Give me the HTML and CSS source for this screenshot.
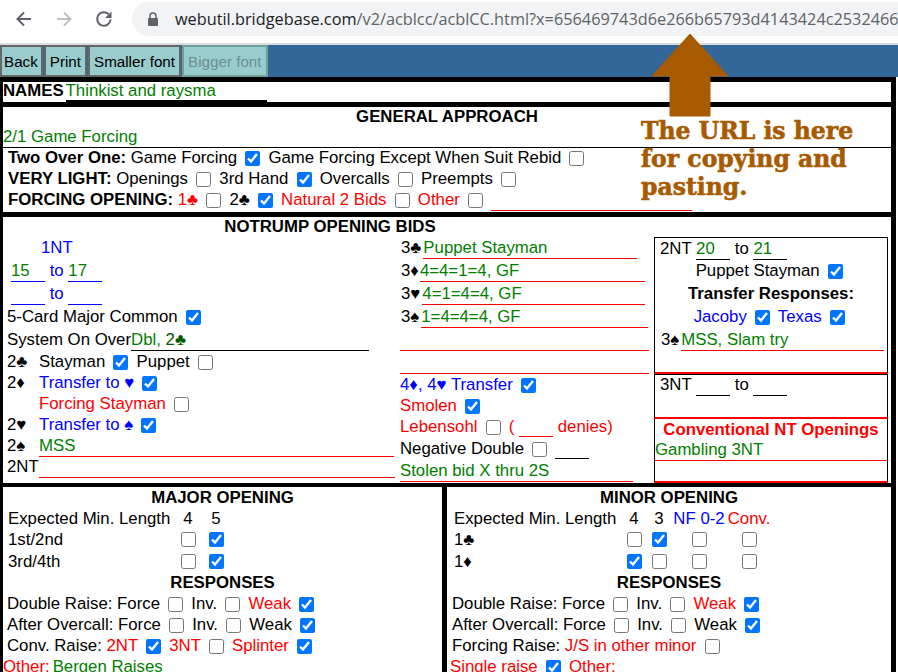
FILE: index.html
```html
<!DOCTYPE html>
<html lang="en">
<head>
<meta charset="utf-8">
<title>Convention Card</title>
<link rel="stylesheet" href="styles.css">
</head>
<body>
<div class="page">
  <header class="chrome">
    <svg class="nav" viewBox="0 0 20 20" width="20" height="20"><path d="M17 10H4M10 3.500 3.500 10l6.500 6.500" fill="none" stroke="#5f6368" stroke-width="2"/></svg>
    <svg class="nav" viewBox="0 0 20 20" width="20" height="20"><path d="M3 10h13M10 3.500l6.500 6.500-6.500 6.500" fill="none" stroke="#bdc1c6" stroke-width="2"/></svg>
    <svg class="nav" viewBox="0 0 20 20" width="20" height="20"><path d="M16.500 10.500a6.700 6.700 0 1 1-1.900-5.200" fill="none" stroke="#5f6368" stroke-width="2"/><path d="M17.500 2.500v6.500H11z" fill="#5f6368"/></svg>
    <div class="omnibox">
      <svg class="lock" viewBox="0 0 12 14" width="12" height="14"><path d="M3 6V4a3 3 0 0 1 6 0v2" fill="none" stroke="#5f6368" stroke-width="1.500"/><rect x="1" y="6" width="10" height="8" rx="1" fill="#5f6368"/></svg>
      <span class="url"><span class="host">webutil.bridgebase.com</span>/v2/acblcc/acblCC.html?x=656469743d6e266b65793d4143424c2532466c253246</span>
    </div>
  </header>
  <nav class="toolbar">
    <button class="btn back">Back</button>
    <button class="btn">Print</button>
    <button class="btn">Smaller font</button>
    <button class="btn off">Bigger font</button>
  </nav>
  <main class="sheet">
    <section class="names"><b>NAMES</b><span class="field green w201 bk2">Thinkist and raysma</span></section>

    <section class="general">
      <h2 class="head">GENERAL APPROACH</h2>
      <div class="approach green">2/1 Game Forcing</div>
      <div class="checks">
        <div class="row"><b>Two Over One:</b> Game Forcing <input type="checkbox" checked> Game Forcing Except When Suit Rebid <input type="checkbox"></div>
        <div class="row"><b>VERY LIGHT:</b> Openings <input type="checkbox"> 3rd Hand <input type="checkbox" checked> Overcalls <input type="checkbox"> Preempts <input type="checkbox"></div>
        <div class="row"><b>FORCING OPENING:</b> <span class="red">1♣</span> <input type="checkbox"> 2♣ <input type="checkbox" checked> <span class="red">Natural 2 Bids</span> <input type="checkbox"> <span class="red">Other</span> <input type="checkbox"> <span class="field w201 rd"></span></div>
      </div>
    </section>

    <section class="nt">
      <h2 class="head nt-head">NOTRUMP OPENING BIDS</h2>
      <div class="nt-cols">
        <div class="col1">
          <div class="tall blue ind1">1NT</div>
          <div class="tall blue ind2"><span class="field w34 green bl">15</span> to <span class="field w34 green bl">17</span></div>
          <div class="tall blue ind2"><span class="field w34 bl"></span> to <span class="field w34 bl"></span></div>
          <div class="tall ind3">5-Card Major Common <input type="checkbox" checked></div>
          <div class="tall sys ind3">System On Over<span class="field w238 green bk">Dbl, <span class="dark-green">2♣</span></span></div>
          <div class="row ind3"><span class="bid">2♣</span>Stayman <input type="checkbox" checked> Puppet <input type="checkbox"></div>
          <div class="row ind3"><span class="bid">2♦</span><span class="blue">Transfer to ♥</span> <input type="checkbox" checked></div>
          <div class="row ind3"><span class="bid"></span><span class="red">Forcing Stayman</span> <input type="checkbox"></div>
          <div class="row ind3"><span class="bid">2♥</span><span class="blue">Transfer to ♠</span> <input type="checkbox" checked></div>
          <div class="row ind3"><span class="bid">2♠</span><span class="field w355 green rd">MSS</span></div>
          <div class="tall ind3"><span class="bid">2NT</span><span class="field w356 rd"></span></div>
        </div>
        <div class="col2">
          <div class="tall pad1">3♣<span class="field gap2 w214 green rd">Puppet Stayman</span></div>
          <div class="tall pad1">3♦<span class="field gap1 w225 green rd">4=4=1=4, GF</span></div>
          <div class="tall pad1">3♥<span class="field gap2 w223 green rd">4=1=4=4, GF</span></div>
          <div class="tall pad1">3♠<span class="field gap2 w227 green rd">1=4=4=4, GF</span></div>
          <div class="tall"><span class="field w249 rd"></span></div>
          <div class="tall"><span class="field w249 rd"></span></div>
          <div class="row up1 blue">4♦, 4♥ Transfer <input type="checkbox" checked></div>
          <div class="row red">Smolen <input type="checkbox" checked></div>
          <div class="row red">Lebensohl <input type="checkbox"> ( <span class="field w34 rd short"></span> denies)</div>
          <div class="row neg">Negative Double <input type="checkbox"> <span class="field w34 bk short"></span></div>
          <div class="tall"><span class="field w233 green rd">Stolen bid X thru 2S</span></div>
        </div>
        <div class="col3">
          <div class="box-a">
            <div class="tall pad5">2NT <span class="field w34 green bk">20</span> to <span class="field w34 green bk">21</span></div>
            <div class="tall center">Puppet Stayman <input type="checkbox" checked></div>
            <div class="tall center"><b>Transfer Responses:</b></div>
            <div class="tall center blue">Jacoby <input type="checkbox" checked> Texas <input type="checkbox" checked></div>
            <div class="tall pad6">3♠<span class="field gap2 w203 green rd">MSS, Slam try</span></div>
          </div>
          <div class="box-b">
            <div class="tall pad5">3NT <span class="field w34 bk"></span> to <span class="field w34 bk"></span></div>
          </div>
          <div class="box-c">
            <div class="conv red"><b>Conventional NT Openings</b></div>
            <div class="field block green rd">Gambling 3NT</div>
          </div>
        </div>
      </div>
    </section>

    <section class="openings">
      <div class="major">
        <h2 class="head sub">MAJOR OPENING</h2>
        <div class="len-major">
          <span class="lab">Expected Min. Length</span><span class="c">4</span><span class="c">5</span>
          <span class="lab">1st/2nd</span><span class="c"><input type="checkbox"></span><span class="c"><input type="checkbox" checked></span>
          <span class="lab">3rd/4th</span><span class="c"><input type="checkbox"></span><span class="c"><input type="checkbox" checked></span>
        </div>
        <h2 class="head sub">RESPONSES</h2>
        <div class="row ind3">Double Raise: Force <input type="checkbox"> Inv. <input type="checkbox"> <span class="red">Weak</span> <input type="checkbox" checked></div>
        <div class="row ind3">After Overcall: Force <input type="checkbox"> Inv. <input type="checkbox"> Weak <input type="checkbox" checked></div>
        <div class="row ind3">Conv. Raise: <span class="red">2NT</span> <input type="checkbox" checked> <span class="red">3NT</span> <input type="checkbox"> <span class="red">Splinter</span> <input type="checkbox" checked></div>
        <div class="tall"><span class="red">Other:</span><span class="green tight">Bergen Raises</span></div>
      </div>
      <div class="minor">
        <h2 class="head sub">MINOR OPENING</h2>
        <div class="len-minor">
          <span class="lab">Expected Min. Length</span><span class="c">4</span><span class="c">3</span><span class="c blue">NF 0-2</span><span class="c red">Conv.</span>
          <span class="lab">1♣</span><span class="c"><input type="checkbox"></span><span class="c"><input type="checkbox" checked></span><span class="c"><input type="checkbox"></span><span class="c"><input type="checkbox"></span>
          <span class="lab">1♦</span><span class="c"><input type="checkbox" checked></span><span class="c"><input type="checkbox"></span><span class="c"><input type="checkbox"></span><span class="c"><input type="checkbox"></span>
        </div>
        <h2 class="head sub">RESPONSES</h2>
        <div class="row ind4">Double Raise: Force <input type="checkbox"> Inv. <input type="checkbox"> <span class="red">Weak</span> <input type="checkbox" checked></div>
        <div class="row ind4">After Overcall: Force <input type="checkbox"> Inv. <input type="checkbox"> Weak <input type="checkbox" checked></div>
        <div class="row ind4">Forcing Raise: <span class="red">J/S in other minor</span> <input type="checkbox"></div>
        <div class="tall ind5 red">Single raise <input type="checkbox" checked> Other:</div>
      </div>
    </section>
  </main>

  <svg class="arrow" viewBox="0 0 78 84" width="78" height="84"><path d="M39 0 77 42H59V82H19V42H1Z" fill="#a85a00" stroke="#a85a00" stroke-width="1" stroke-linejoin="round"/></svg>
  <p class="note">The URL is here<br>for copying and<br>pasting.</p>
</div>
</body>
</html>
```

FILE: styles.css
```css
* { box-sizing: border-box; }
html, body { margin: 0; padding: 0; background: #fff; }
.page {
  position: relative;
  width: 898px;
  height: 672px;
  overflow: hidden;
  font: 16.800px/21px "Liberation Sans", Arial, sans-serif;
  color: #000;
}
.chrome {
  display: flex;
  align-items: center;
  height: 45px;
  padding: 0 0 5px 14px;
  border-bottom: 2px solid #dadce0;
}
.nav { margin-right: 20px; flex: none; }
.omnibox {
  display: flex;
  align-items: center;
  flex: none;
  width: 800px;
  height: 34px;
  margin-left: -2px;
  padding-left: 15px;
  border-radius: 17px;
  background: #f1f3f4;
  white-space: nowrap;
}
.lock { margin-right: 16px; flex: none; }
.url { font: 16.300px "Open Sans", sans-serif; color: #5f6368; }
.host { color: #202124; }

.toolbar {
  display: flex;
  gap: 1px;
  height: 32px;
  background: #336699;
}
.btn {
  height: 32px;
  padding: 0 4px;
  border: 2px solid #666;
  background: #99cccc;
  font: 15.200px "Liberation Sans", Arial, sans-serif;
  color: #000;
}
.btn.back { padding: 0 3px 0 2px; }
.btn.off { color: #6b9090; border-color: #6f9f9f; }

.sheet {
  width: 896px;
  border: solid #000;
  border-width: 5px 5px 0 3px;
}
.names {
  display: flex;
  gap: 2px;
  height: 20px;
  line-height: 18px;
  white-space: pre;
}
.names .field { height: 20px; line-height: 17px; }
.general { border-top: 5px solid #000; height: 110px; }
.head { margin: 0; font-size: 16.800px; line-height: 20px; font-weight: 700; text-align: center; }
.approach { height: 20px; line-height: 20px; }
.checks { border-top: 1px solid #000; padding: 0 0 0 5px; }
.checks .row:first-child { margin-top: -1px; }
.nt { border-top: 5px solid #000; height: 271px; }
.nt-head { padding-right: 234px; }
.nt-cols { display: flex; }
.col1 { width: 397px; }
.col2 { width: 254px; }
.col3 { width: 234px; }

.row { height: 21px; line-height: 21px; white-space: pre; }
.tall { height: 23px; line-height: 21px; white-space: pre; }
.sys { height: 22px; }
.up1 { margin-top: -1px; }
.ind1 { padding-left: 38px; }
.ind2 { padding-left: 8px; }
.ind3 { padding-left: 4px; }
.ind4 { padding-left: 5px; }
.ind5 { padding-left: 3px; }
.neg { height: 23px; padding-top: 1px; }
.center { text-align: center; }
.pad1 { padding-left: 1px; }
.pad5 { padding-left: 5px; }
.pad6 { padding-left: 6px; }
.bid { display: inline-block; width: 32px; }
.tight { margin-left: 3px; }
.gap1 { margin-left: 1px; }
.gap2 { margin-left: 2px; }

.field {
  display: inline-block;
  vertical-align: top;
  height: 22px;
  line-height: 21px;
  border-bottom: 1px solid;
}
.field.short { height: 21px; }
.block { display: block; height: 21px; line-height: 19px; }
.green { color: #008000; }
.dark-green { color: #005a00; }
.blue { color: #0000ff; }
.red { color: #ff0000; }
.field.rd { border-bottom-color: #ff0000; }
.field.bl { border-bottom-color: #0000ff; }
.field.bk { border-bottom-color: #000; }
.field.bk2 { border-bottom: 2px solid #000; }
.w34 { width: 34px; }
.w201 { width: 201px; }
.w203 { width: 203px; }
.w214 { width: 214px; }
.w223 { width: 223px; }
.w225 { width: 225px; }
.w227 { width: 227px; }
.w233 { width: 233px; }
.w238 { width: 238px; }
.w249 { width: 249px; }
.w355 { width: 355px; }
.w356 { width: 356px; }

input[type="checkbox"] {
  width: 15px;
  height: 15px;
  margin: 0 3.500px;
  vertical-align: -3px;
}

.box-a {
  height: 137px;
  border: 1px solid #000;
  border-bottom: 2px solid #ff0000;
}
.box-a .tall:first-child { height: 22px; }
.box-b {
  height: 45px;
  border: solid #000;
  border-width: 1px 1px 2px;
  border-bottom-color: #ff0000;
}
.box-b .tall { margin-top: -1px; }
.box-c {
  height: 64px;
  border: solid #000;
  border-width: 0 1px 2px;
  border-bottom-color: #ff0000;
}
.conv { text-align: center; height: 21px; line-height: 21px; }

.openings { display: flex; background: #000; gap: 5px; border-top: 4px solid #000; height: 190px; }
.major { width: 439px; background: #fff; }
.minor { flex: 1; background: #fff; }
.sub { height: 21px; line-height: 22px; }
.len-major, .len-minor { display: grid; align-items: center; grid-template-rows: 21px 21px 22px; }
.len-major { grid-template-columns: 166px 28px 28px; padding-left: 5px; }
.len-minor { grid-template-columns: 168px 24px 26px 54px 46px; padding-left: 7px; }
.lab { white-space: nowrap; }
.c { text-align: center; white-space: nowrap; }
.c input { display: block; margin: 0 auto; }

.arrow { position: absolute; left: 651px; top: 34px; }
.note {
  position: absolute;
  left: 641px;
  top: 117px;
  margin: 0;
  font: 700 23.500px/28px "DejaVu Serif", serif;
  -webkit-text-stroke: 0.600px #a85a00;
  color: #a85a00;
  white-space: nowrap;
}
```
